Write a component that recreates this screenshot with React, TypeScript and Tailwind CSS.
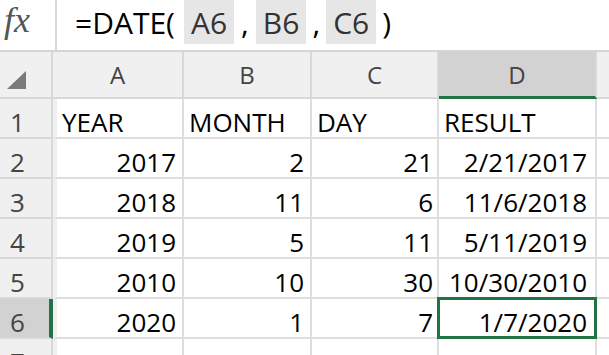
import React from "react";

const data: string[][] = [
  ["YEAR", "MONTH", "DAY", "RESULT"],
  ["2017", "2", "21", "2/21/2017"],
  ["2018", "11", "6", "11/6/2018"],
  ["2019", "5", "11", "5/11/2019"],
  ["2010", "10", "30", "10/30/2010"],
  ["2020", "1", "7", "1/7/2020"],
  ["", "", "", ""],
];

const font = { fontFamily: '"Open Sans", "Noto Sans", sans-serif' };

function Chip({ children }: { children: React.ReactNode }) {
  return (
    <div className="h-[44px] bg-[#e6e6e6] px-[7px] flex items-end pb-[6px] text-[#333]">
      {children}
    </div>
  );
}

export default function App() {
  return (
    <div className="w-[609px] h-[355px] overflow-hidden bg-white" style={font}>
      {/* Formula bar */}
      <div className="flex h-[52px] border-b-2 border-[#d6d6d6]">
        <div className="w-[57px] shrink-0 border-r-2 border-[#d6d6d6] flex items-end pb-[12px] pl-[4px]">
          <span
            className="text-[36px] leading-[36px] italic text-[#555]"
            style={{ fontFamily: '"Liberation Serif", "DejaVu Serif", serif' }}
          >
            fx
          </span>
        </div>
        <div className="flex items-start pl-[18px] text-[30px] leading-[30px] text-black">
          <div className="h-[44px] flex items-end pb-[6px] pr-[9px]">=DATE(</div>
          <Chip>A6</Chip>
          <div className="h-[44px] flex items-end pb-[6px] px-[7px]">,</div>
          <Chip>B6</Chip>
          <div className="h-[44px] flex items-end pb-[6px] px-[6px]">,</div>
          <Chip>C6</Chip>
          <div className="h-[44px] flex items-end pb-[6px] pl-[6px]">)</div>
        </div>
      </div>

      {/* Column header row */}
      <div className="flex h-[47px] bg-[#f0f0f0] text-[24px] text-[#444]">
        <div className="w-[53px] shrink-0 border-r-2 border-b-2 border-[#d8d8d8] flex items-center">
          <svg width="22" height="20" viewBox="0 0 22 20" className="ml-[7px] mt-[12px]">
            <polygon points="19,0 19,18 0,18" fill="#7a7a7a" />
          </svg>
        </div>
        <div className="w-[131px] shrink-0 border-r-2 border-b-2 border-[#d8d8d8] flex items-center justify-center">A</div>
        <div className="w-[128px] shrink-0 border-r-2 border-b-2 border-[#d8d8d8] flex items-center justify-center">B</div>
        <div className="w-[127px] shrink-0 border-r-2 border-b-2 border-[#d8d8d8] flex items-center justify-center">C</div>
        <div className="w-[158px] shrink-0 border-r-2 border-[#d8d8d8] border-b-[3px] border-b-[#217346] bg-[#d2d2d2] flex items-center justify-center pt-[2px]">D</div>
        <div className="flex-1 border-b-2 border-[#d8d8d8]" />
      </div>

      {/* Data rows */}
      {data.map((r, i) => {
        const isHeaderText = i === 0;
        const selected = i === 5;
        const align = isHeaderText ? "justify-start pl-[5px]" : "justify-end";
        return (
          <div key={i} className="flex h-[40px] text-[26px] leading-[26px] text-black">
            <div
              className={
                selected
                  ? "w-[53px] shrink-0 bg-[#d2d2d2] border-r-4 border-r-[#217346] border-b-2 border-b-[#d8d8d8] flex items-end pb-[2px] pl-[10px] text-[#444]"
                  : "w-[53px] shrink-0 bg-[#f0f0f0] border-r-2 border-b-2 border-[#d8d8d8] flex items-end pb-[2px] pl-[10px] text-[#444]"
              }
            >
              {i + 1}
            </div>
            <div className={`w-[131px] shrink-0 border-l-4 border-l-[#efefef] border-r-2 border-b-2 border-[#dedede] flex items-end pb-[2px] pr-[6px] ${align}`}>
              {r[0]}
            </div>
            <div className={`w-[128px] shrink-0 border-r-2 border-b-2 border-[#dedede] flex items-end pb-[2px] pr-[6px] ${align}`}>
              {r[1]}
            </div>
            <div className={`w-[127px] shrink-0 border-r-2 border-b-2 border-[#dedede] flex items-end pb-[2px] pr-[4px] ${align}`}>
              {r[2]}
            </div>
            <div className={`relative w-[158px] shrink-0 border-r-2 border-b-2 border-[#dedede] flex items-end pb-[2px] pr-[8px] ${align}`}>
              {r[3]}
              {selected && (
                <div className="absolute -left-[2px] -top-[2px] -right-[2px] -bottom-[2px] border-[3px] border-[#217346]" />
              )}
            </div>
            <div className="flex-1 border-b-2 border-[#dedede]" />
          </div>
        );
      })}
    </div>
  );
}
